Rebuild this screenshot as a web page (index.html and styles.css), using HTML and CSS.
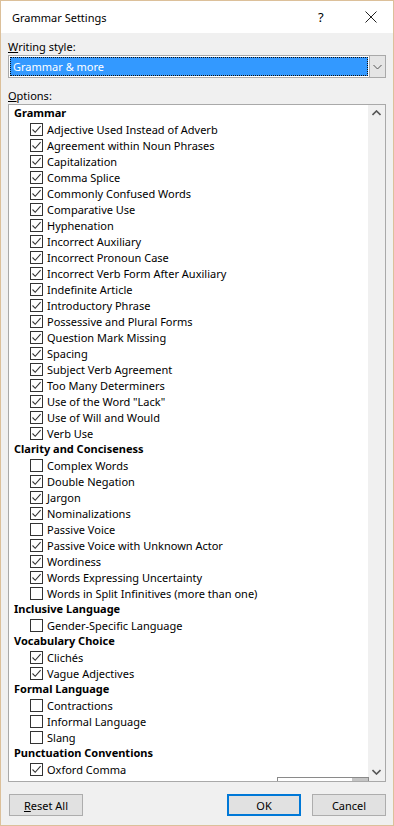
FILE: index.html
```html
<!DOCTYPE html>
<html lang="en">
<head>
    <meta charset="UTF-8">
    <meta name="viewport" content="width=device-width, initial-scale=1.0">
    <title>Grammar Settings</title>
    <link rel="stylesheet" href="styles.css">
</head>
<body>
    <div class="dialog">
        <div class="titlebar">
            <span class="title">Grammar Settings</span>
            <span class="help">?</span>
            <span class="close">
                <svg width="12" height="12" viewBox="0 0 12 12"><path d="M0.5 0.5L11.5 11.5M11.5 0.5L0.5 11.5" stroke="#222" stroke-width="1"/></svg>
            </span>
        </div>
        <div class="content">
            <div class="label"><u>W</u>riting style:</div>
            <div class="select">
                <div class="select-value">Grammar &amp; more</div>
                <div class="select-btn">
                    <svg width="9" height="6" viewBox="0 0 9 6"><path d="M0.5 1L4.5 5L8.5 1" stroke="#555" stroke-width="1" fill="none"/></svg>
                </div>
            </div>
            <div class="label options-label"><u>O</u>ptions:</div>
            <div class="listbox">
                <div class="list" id="list"></div>
                <div class="scrollbar">
                    <svg class="arrow" width="9" height="6" viewBox="0 0 9 6"><path d="M0.5 5L4.5 1L8.5 5" stroke="#555" stroke-width="1.6" fill="none"/></svg>
                    <svg class="arrow" width="9" height="6" viewBox="0 0 9 6"><path d="M0.5 1L4.5 5L8.5 1" stroke="#555" stroke-width="1.6" fill="none"/></svg>
                </div>
                <div class="peek"><span class="peek-thumb"></span></div>
            </div>
            <div class="footer">
                <button class="btn"><u>R</u>eset All</button>
                <span class="spacer"></span>
                <button class="btn btn-default">OK</button>
                <button class="btn">Cancel</button>
            </div>
        </div>
    </div>
    <script src="script.js"></script>
</body>
</html>
```

FILE: styles.css
```css
* {
    box-sizing: border-box;
}
body {
    margin: 0;
    font-family: "Noto Sans", "Open Sans", sans-serif;
    font-size: 11px;
    color: #000;
}
.dialog {
    width: 394px;
    height: 826px;
    border: 1px solid #dcc09a;
    background: #f0f0f0;
    display: flex;
    flex-direction: column;
}
.titlebar {
    flex: none;
    height: 32px;
    background: #fff;
    display: flex;
    align-items: center;
    padding-left: 11px;
}
.title {
    flex: 1;
}
.help {
    width: 14px;
    margin-right: 33px;
    font-size: 13px;
}
.close {
    display: flex;
    margin-right: 16px;
}
.content {
    flex: 1;
    display: flex;
    flex-direction: column;
    padding: 6px 7px 9px 7px;
}
.label {
    line-height: 16px;
}
.select {
    height: 23px;
    border: 1px solid #a9a9a9;
    background: #fff;
    display: flex;
    padding: 1px;
}
.select-value {
    flex: 1;
    background: #3399ff;
    color: #fff;
    border: 1px dotted #111;
    line-height: 17px;
    padding-left: 2px;
}
.select-btn {
    width: 17px;
    margin: -2px -2px -2px 1px;
    background: #e5e5e5;
    border: 1px solid #a9a9a9;
    display: flex;
    align-items: center;
    justify-content: center;
}
.options-label {
    margin-top: 10px;
}
.listbox {
    position: relative;
    flex: none;
    height: 678px;
    border: 1px solid #a9a9a9;
    background: #fff;
    display: flex;
    overflow: hidden;
}
.list {
    flex: 1;
    padding-left: 5px;
}
.group {
    font-weight: bold;
    line-height: 16px;
    height: 16px;
}
.item {
    display: flex;
    align-items: center;
    height: 16px;
    padding-left: 16px;
}
.box {
    width: 13px;
    height: 13px;
    border: 1px solid #333;
    margin-right: 4px;
    display: flex;
}
.scrollbar {
    width: 17px;
    background: #f0f0f0;
    display: flex;
    flex-direction: column;
    justify-content: space-between;
    align-items: center;
    padding: 5px 0 6px 0;
}
.peek {
    position: absolute;
    left: 268px;
    bottom: 0;
    width: 92px;
    height: 4px;
    border: 1px solid #8a8a8a;
    border-bottom: none;
    background: #fff;
    display: flex;
    justify-content: flex-end;
}
.peek-thumb {
    width: 16px;
    background: #c4c4c4;
}
.footer {
    display: flex;
    margin-top: 12px;
    gap: 10px;
}
.spacer {
    flex: 1;
}
.btn {
    width: 74px;
    height: 22px;
    border: 1px solid #adadad;
    background: #e1e1e1;
    font-family: "Noto Sans", "Open Sans", sans-serif;
    font-size: 11px;
    padding: 0;
    margin-left: 1px;
}
.btn-default {
    border: 2px solid #0078d7;
}
```

FILE: script.js
```js
const groups = [
    ["Grammar", [
        ["Adjective Used Instead of Adverb", true],
        ["Agreement within Noun Phrases", true],
        ["Capitalization", true],
        ["Comma Splice", true],
        ["Commonly Confused Words", true],
        ["Comparative Use", true],
        ["Hyphenation", true],
        ["Incorrect Auxiliary", true],
        ["Incorrect Pronoun Case", true],
        ["Incorrect Verb Form After Auxiliary", true],
        ["Indefinite Article", true],
        ["Introductory Phrase", true],
        ["Possessive and Plural Forms", true],
        ["Question Mark Missing", true],
        ["Spacing", true],
        ["Subject Verb Agreement", true],
        ["Too Many Determiners", true],
        ["Use of the Word \"Lack\"", true],
        ["Use of Will and Would", true],
        ["Verb Use", true],
    ]],
    ["Clarity and Conciseness", [
        ["Complex Words", false],
        ["Double Negation", true],
        ["Jargon", true],
        ["Nominalizations", true],
        ["Passive Voice", false],
        ["Passive Voice with Unknown Actor", true],
        ["Wordiness", true],
        ["Words Expressing Uncertainty", true],
        ["Words in Split Infinitives (more than one)", false],
    ]],
    ["Inclusive Language", [
        ["Gender-Specific Language", false],
    ]],
    ["Vocabulary Choice", [
        ["Clichés", true],
        ["Vague Adjectives", true],
    ]],
    ["Formal Language", [
        ["Contractions", false],
        ["Informal Language", false],
        ["Slang", false],
    ]],
    ["Punctuation Conventions", [
        ["Oxford Comma", true],
    ]],
];

const check = '<svg width="11" height="11" viewBox="0 0 11 11"><path d="M1.5 5.5L4.2 8.3L9.6 2.2" stroke="#333" stroke-width="1.1" fill="none"/></svg>';

const list = document.getElementById("list");
let html = "";
groups.forEach(([name, items]) => {
    html += `<div class="group">${name}</div>`;
    items.forEach(([label, on]) => {
        html += `<div class="item"><span class="box">${on ? check : ""}</span>${label}</div>`;
    });
});
list.innerHTML = html;
```
